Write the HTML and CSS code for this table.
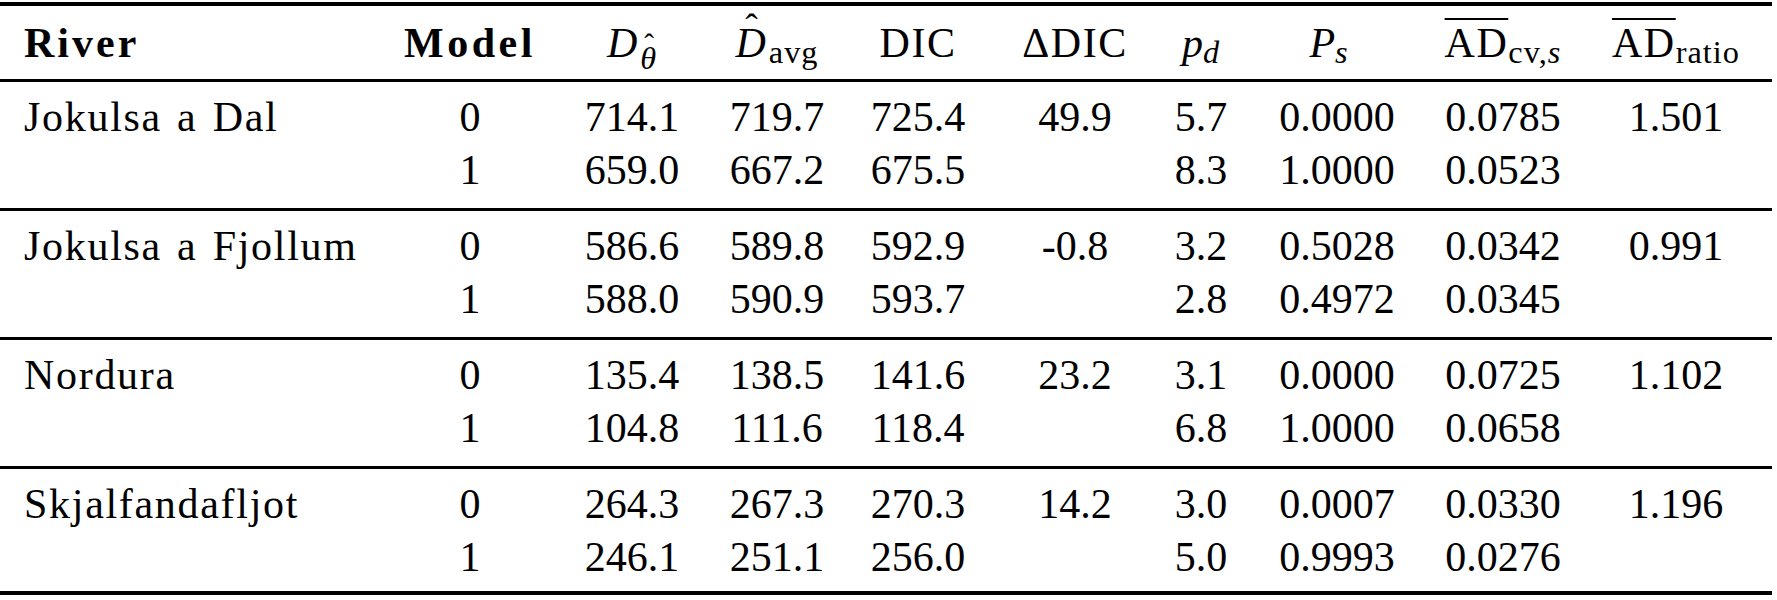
FILE: index.html
```html
<!DOCTYPE html>
<html lang="en">
<head>
  <meta charset="UTF-8" />
  <title>DIC comparison</title>
  <link rel="stylesheet" href="styles.css">
</head>
<body>

  <!-- Model comparison table -->
  <table class="results">
    <colgroup>
      <col class="c-river">
      <col class="c-model">
      <col class="c-dtheta">
      <col class="c-davg">
      <col class="c-dic">
      <col class="c-delta">
      <col class="c-pd">
      <col class="c-ps">
      <col class="c-adcv">
      <col class="c-adratio">
    </colgroup>
    <thead>
      <tr>
        <th class="river strong">River</th>
        <th class="strong model">Model</th>
        <th><i class="big">D</i><sub class="low"><span class="hat small-hat"><i>θ</i></span></sub></th>
        <th><span class="hat"><i class="big">D</i></span><sub>avg</sub></th>
        <th class="roman">DIC</th>
        <th class="roman">ΔDIC</th>
        <th><i>p</i><sub><i>d</i></sub></th>
        <th class="ps"><i>P</i><sub><i>s</i></sub></th>
        <th><span class="bar">AD</span><sub>cv,<i>s</i></sub></th>
        <th class="last"><span class="bar">AD</span><sub>ratio</sub></th>
      </tr>
    </thead>
    <tbody>
      <tr class="top">
        <td class="river">Jokulsa a Dal</td>
        <td>0</td><td>714.1</td><td>719.7</td><td>725.4</td><td>49.9</td>
        <td>5.7</td><td>0.0000</td><td>0.0785</td><td class="last">1.501</td>
      </tr>
      <tr class="bottom">
        <td class="river"></td>
        <td>1</td><td>659.0</td><td>667.2</td><td>675.5</td><td></td>
        <td>8.3</td><td>1.0000</td><td>0.0523</td><td class="last"></td>
      </tr>
    </tbody>
    <tbody>
      <tr class="top">
        <td class="river">Jokulsa a Fjollum</td>
        <td>0</td><td>586.6</td><td>589.8</td><td>592.9</td><td>-0.8</td>
        <td>3.2</td><td>0.5028</td><td>0.0342</td><td class="last">0.991</td>
      </tr>
      <tr class="bottom">
        <td class="river"></td>
        <td>1</td><td>588.0</td><td>590.9</td><td>593.7</td><td></td>
        <td>2.8</td><td>0.4972</td><td>0.0345</td><td class="last"></td>
      </tr>
    </tbody>
    <tbody>
      <tr class="top">
        <td class="river">Nordura</td>
        <td>0</td><td>135.4</td><td>138.5</td><td>141.6</td><td>23.2</td>
        <td>3.1</td><td>0.0000</td><td>0.0725</td><td class="last">1.102</td>
      </tr>
      <tr class="bottom">
        <td class="river"></td>
        <td>1</td><td>104.8</td><td>111.6</td><td>118.4</td><td></td>
        <td>6.8</td><td>1.0000</td><td>0.0658</td><td class="last"></td>
      </tr>
    </tbody>
    <tbody class="final">
      <tr class="top">
        <td class="river">Skjalfandafljot</td>
        <td>0</td><td>264.3</td><td>267.3</td><td>270.3</td><td>14.2</td>
        <td>3.0</td><td>0.0007</td><td>0.0330</td><td class="last">1.196</td>
      </tr>
      <tr class="bottom">
        <td class="river"></td>
        <td>1</td><td>246.1</td><td>251.1</td><td>256.0</td><td></td>
        <td>5.0</td><td>0.9993</td><td>0.0276</td><td class="last"></td>
      </tr>
    </tbody>
  </table>

</body>
</html>
```

FILE: styles.css
```css
* {
  margin: 0;
  padding: 0;
  box-sizing: border-box;
}

body {
  background: #fff;
  color: #000;
  font-family: "Liberation Serif", serif;
  font-size: 42px;
}

/* booktabs-like table */
.results {
  margin-top: 2px;
  width: 1772px;
  table-layout: fixed;
  border-collapse: separate;
  border-spacing: 0;
  border-top: 4px solid #000;
  border-bottom: 4px solid #000;
}

.c-river { width: 400px; }
.c-model { width: 140px; }
.c-dtheta { width: 184px; }
.c-davg { width: 106px; }
.c-dic { width: 176px; }
.c-delta { width: 138px; }
.c-pd { width: 114px; }
.c-ps { width: 158px; }
.c-adcv { width: 174px; }
.c-adratio { width: 182px; }

.results th,
.results td {
  text-align: center;
  line-height: 53px;
  font-weight: normal;
  white-space: nowrap;
}

.results th {
  height: 76px;
  padding: 11px 0 9px;
  border-bottom: 3px solid #000;
}

.results .river {
  text-align: left;
  padding-left: 24px;
  letter-spacing: 1.7px;
  word-spacing: 3px;
}

.results .last {
  padding-right: 10px;
}

.results .strong {
  font-weight: bold;
  letter-spacing: 3px;
}

.results .model {
  letter-spacing: 3.5px;
}

.results .roman {
  letter-spacing: 1.5px;
}

.results .ps {
  padding-right: 16px;
}

tbody tr.top td {
  padding-top: 9px;
}

tbody tr.bottom td {
  padding-bottom: 11px;
}

tbody + tbody tr.top td {
  border-top: 3px solid #000;
}

tbody.final tr.bottom td {
  padding-bottom: 7px;
}

/* math bits */
i {
  font-style: italic;
}

i.big {
  letter-spacing: 3px;
}

sub {
  font-size: 0.77em;
  line-height: 0;
  vertical-align: -0.2em;
  letter-spacing: 1px;
}

sub.low {
  vertical-align: -0.36em;
}

.hat {
  position: relative;
}

.hat::after {
  content: "\02C6";
  position: absolute;
  left: 0.26em;
  top: -0.3em;
  line-height: 1;
  font-size: 0.9em;
  font-style: normal;
}

.small-hat::after {
  left: 0.14em;
  top: -0.32em;
}

.bar {
  text-decoration: overline;
  text-decoration-thickness: 2px;
  letter-spacing: 1.5px;
}
```
